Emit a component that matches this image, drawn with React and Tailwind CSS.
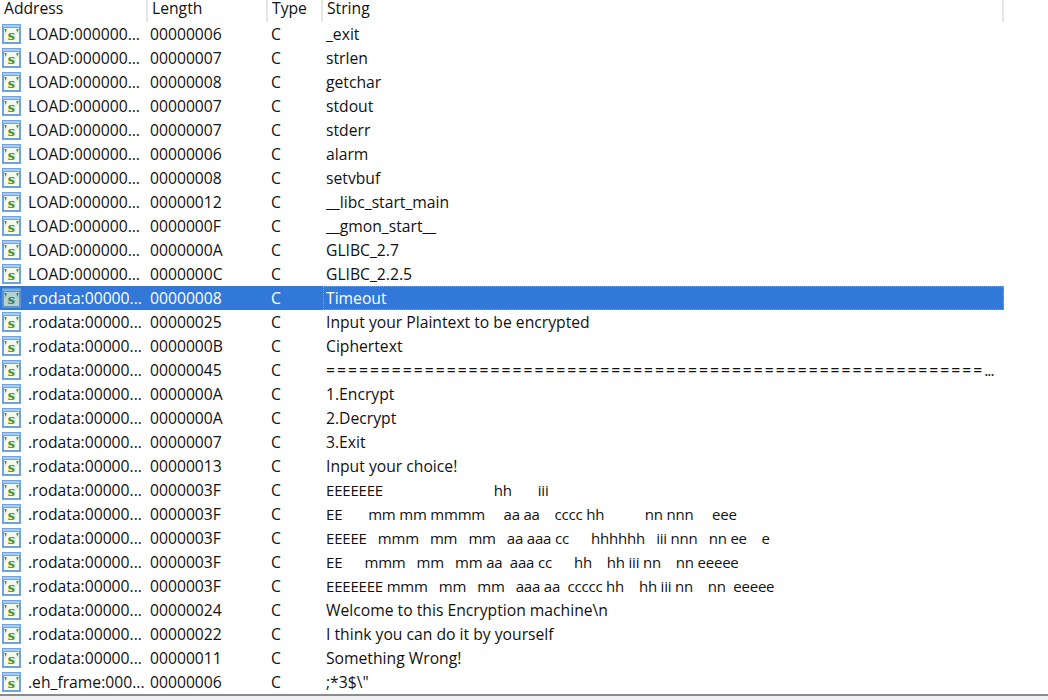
import React from 'react';

const rows = [
  ['LOAD:000000...', '00000006', '_exit'],
  ['LOAD:000000...', '00000007', 'strlen'],
  ['LOAD:000000...', '00000008', 'getchar'],
  ['LOAD:000000...', '00000007', 'stdout'],
  ['LOAD:000000...', '00000007', 'stderr'],
  ['LOAD:000000...', '00000006', 'alarm'],
  ['LOAD:000000...', '00000008', 'setvbuf'],
  ['LOAD:000000...', '00000012', '__libc_start_main'],
  ['LOAD:000000...', '0000000F', '__gmon_start__'],
  ['LOAD:000000...', '0000000A', 'GLIBC_2.7'],
  ['LOAD:000000...', '0000000C', 'GLIBC_2.2.5'],
  ['.rodata:00000...', '00000008', 'Timeout'],
  ['.rodata:00000...', '00000025', 'Input your Plaintext to be encrypted'],
  ['.rodata:00000...', '0000000B', 'Ciphertext'],
  ['.rodata:00000...', '00000045', '='.repeat(60) + '...'],
  ['.rodata:00000...', '0000000A', '1.Encrypt'],
  ['.rodata:00000...', '0000000A', '2.Decrypt'],
  ['.rodata:00000...', '00000007', '3.Exit'],
  ['.rodata:00000...', '00000013', 'Input your choice!'],
  ['.rodata:00000...', '0000003F', 'EEEEEEE                              hh       iii'],
  ['.rodata:00000...', '0000003F', 'EE       mm mm mmmm     aa aa    cccc hh           nn nnn     eee'],
  ['.rodata:00000...', '0000003F', 'EEEEE   mmm   mm   mm   aa aaa cc      hhhhhh   iii nnn   nn ee    e'],
  ['.rodata:00000...', '0000003F', 'EE      mmm   mm   mm aa  aaa cc      hh    hh iii nn    nn eeeee'],
  ['.rodata:00000...', '0000003F', 'EEEEEEE mmm   mm   mm   aaa aa  ccccc hh    hh iii nn    nn  eeeee'],
  ['.rodata:00000...', '00000024', 'Welcome to this Encryption machine\\n'],
  ['.rodata:00000...', '00000022', 'I think you can do it by yourself'],
  ['.rodata:00000...', '00000011', 'Something Wrong!'],
  ['.eh_frame:000...', '00000006', ';*3$\\"'],
];

function StringIcon({ selected }) {
  const green = selected ? '#2f7f62' : '#45922f';
  return (
    <svg width="19" height="20" viewBox="0 0 19 20" className="shrink-0">
      <rect x="0" y="0" width="19" height="20" fill={selected ? '#5c93d2' : '#6ea3e0'} />
      <rect x="1" y="1" width="17" height="2" fill={selected ? '#7fb0e0' : '#a9cdf2'} />
      <rect x="2" y="4" width="15" height="14" fill={selected ? '#b4d0d0' : '#f4f9ee'} />
      <text x="9.5" y="15.5" textAnchor="middle" fontFamily="'DejaVu Serif', serif" fontWeight="700" fontSize="13" fill={green}>s</text>
      <path d="M2.5 5h2v1.5l-1 2h-.6l.4-2h-.8z" fill={green} />
      <path d="M16.5 5h-2v1.5l1 2h.6l-.4-2h.8z" fill={green} />
    </svg>
  );
}

function HeaderCell({ width, children }) {
  return (
    <div className={`${width} h-[22px] pl-1 border-r-2 border-[#e5e5e5] leading-[17px]`}>
      {children}
    </div>
  );
}

function App() {
  return (
    <div className="w-[1048px] h-[700px] bg-white overflow-hidden flex flex-col font-['Open_Sans','Noto_Sans',sans-serif] text-[15.7px] text-[#111]">
      <div className="flex-1 w-[1004px]">
        <div className="flex">
          <HeaderCell width="w-[148px]">Address</HeaderCell>
          <HeaderCell width="w-[120px]">Length</HeaderCell>
          <HeaderCell width="w-[55px]">Type</HeaderCell>
          <HeaderCell width="w-[681px]">String</HeaderCell>
        </div>
        {rows.map((row, i) => {
          const selected = i === 11;
          const isRule = i === 14;
          const isArt = i >= 19 && i <= 23;
          return (
            <div key={i} className={`flex items-center h-[24px] ${selected ? 'bg-[#3178d8] text-white' : ''}`}>
              <div className="w-[148px] pl-[2px] flex items-center gap-[7px] whitespace-nowrap">
                <StringIcon selected={selected} />
                <span className="pt-[2px]">{row[0]}</span>
              </div>
              <div className="w-[120px] pl-[2px] pt-[2px]">{row[1]}</div>
              <div className="w-[55px] pl-[3px] pt-[2px]">C</div>
              <div className={`flex-1 h-full pl-[3px] flex items-center whitespace-pre ${isArt ? 'text-[15px] tracking-[-0.2px] pt-[1px]' : 'pt-[2px]'} ${selected ? 'outline-1 outline-dotted -outline-offset-1 outline-[#e8913a]' : ''}`}>
                {isRule ? (
                  <>
                    <span className="tracking-[2px]">{row[2].slice(0, 60)}</span>
                    <span className="tracking-[-1px]">{row[2].slice(60)}</span>
                  </>
                ) : row[2]}
              </div>
            </div>
          );
        })}
      </div>
      <div className="h-[6px] border-t-2 border-[#8a8a94] bg-[#f0f0f0]" />
    </div>
  );
}

export default App;
